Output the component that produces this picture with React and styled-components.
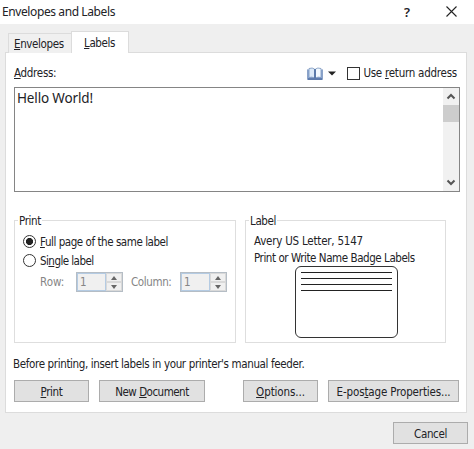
import React from "react";
import styled, { createGlobalStyle } from "styled-components";

const Global = createGlobalStyle`
  * { box-sizing: border-box; }
  html, body { margin: 0; background: #efefef; overflow: hidden; }
  button { font: inherit; color: inherit; }
`;

const Dialog = styled.main`
  width: 474px;
  height: 449px;
  background: #efefef;
  color: #222226;
  font: 11.5px/16px "DejaVu Sans Condensed", "DejaVu Sans", sans-serif;
  font-stretch: condensed;
  overflow: hidden;
`;

const Text = styled.span`
  display: block;
  white-space: nowrap;
  letter-spacing: ${(p) => p.$track ?? -0.38}px;
`;

const Key = styled.span`
  text-decoration: underline;
  text-decoration-thickness: 1px;
  text-underline-offset: 1px;
  text-decoration-skip-ink: none;
`;

const TitleBar = styled.header`
  display: flex;
  align-items: center;
  height: 24px;
  padding: 0 17px 1px 2px;
  background: #fff;
  font-family: "Noto Sans", sans-serif;
  font-size: 12px;
`;

const TitleActions = styled.div`
  display: flex;
  align-items: center;
  gap: 36px;
  margin-left: auto;
  font-size: 13px;
  font-weight: 600;
  svg { display: block; }
`;

const TabStrip = styled.nav`
  display: flex;
  align-items: flex-end;
  height: 29px;
  padding-left: 8px;
`;

const Tab = styled.div`
  position: relative;
  z-index: ${(p) => (p.$active ? 1 : 0)};
  width: ${(p) => (p.$active ? 58 : 63)}px;
  height: ${(p) => (p.$active ? 22 : 20)}px;
  padding: ${(p) => (p.$active ? "3px 0 0 12px" : "2px 0 0 5px")};
  border: 1px solid #dcdcdc;
  border-bottom: 0;
  border-right-width: ${(p) => (p.$active ? 1 : 0)}px;
  background: ${(p) => (p.$active ? "#fff" : "#f0f0f0")};
`;

const Panel = styled.section`
  width: 462px;
  height: 361px;
  margin: -1px 0 0 5px;
  padding: 12px 6px 0 8px;
  border: 1px solid #dcdcdc;
  background: #fff;
`;

const AddressHeader = styled.div`
  display: flex;
  align-items: center;
  height: 16px;
`;

const AddressTools = styled.div`
  display: flex;
  align-items: center;
  margin-left: auto;
  padding-right: 3px;
  svg { display: block; }
`;

const CheckBox = styled.span`
  width: 13px;
  height: 13px;
  margin: 0 3px 0 11px;
  border: 1px solid #333;
  background: #fff;
`;

const AddressBox = styled.div`
  display: flex;
  justify-content: space-between;
  width: 446px;
  height: 105px;
  margin-top: 6px;
  border: 1px solid #858585;
  font-family: "Noto Sans", sans-serif;
  font-size: 13.5px;
  line-height: 20px;
  > span { padding-left: 2px; }
`;

const ScrollBar = styled.div`
  display: flex;
  flex-direction: column;
  justify-content: space-between;
  width: 16px;
  background: #f1f1f1;
  svg { display: block; }
`;

const Thumb = styled.div`
  height: 17px;
  margin-bottom: auto;
  background: #cdcdcd;
`;

const Groups = styled.div`
  display: flex;
  gap: 9px;
  margin-top: 20px;
`;

const Group = styled.section`
  width: ${(p) => p.$width}px;
  height: 131px;
`;

const Legend = styled.div`
  display: flex;
  align-items: center;
  gap: 1px;
  height: 16px;
  margin-bottom: -8px;
  > span { padding-top: 2px; }
  &::before { content: ""; width: 4px; height: 1px; background: #dedede; }
  &::after { content: ""; flex: 1; height: 1px; background: #dedede; }
`;

const GroupBody = styled.div`
  height: 123px;
  padding: ${(p) => p.$pad};
  border: 1px solid #dedede;
  border-top: 0;
`;

const RadioRow = styled.div`
  display: flex;
  align-items: center;
  gap: 4px;
  height: 19px;
  > span:last-child { padding-top: 1px; }
`;

const Radio = styled.span`
  width: 13px;
  height: 13px;
  border: 1px solid #333;
  border-radius: 50%;
  background: ${(p) => (p.$on ? "radial-gradient(circle, #222 0 3.2px, #fff 3.9px)" : "#fff")};
`;

const NumberRow = styled.div`
  display: flex;
  align-items: center;
  height: 20px;
  margin-top: 2px;
  padding-left: 17px;
  color: #858585;
`;

const NumberLabel = styled.div`
  width: ${(p) => p.$width}px;
  padding-left: ${(p) => p.$inset || 0}px;
`;

const Spinner = styled.div`
  display: flex;
  justify-content: space-between;
  width: 47px;
  height: 20px;
  border: 1px solid #b5bdc5;
  background: #f0f0f0;
`;

const SpinnerValue = styled.div`
  width: 29px;
  padding-left: 2px;
  border: 1px solid #b4cbe3;
  line-height: 17px;
`;

const SpinButtons = styled.div`
  display: flex;
  flex-direction: column;
  width: 16px;
  background: #f0f0f0;
`;

const SpinButton = styled.span`
  display: grid;
  place-items: center;
  height: 9px;
  border: 1px solid #d9d9d9;
  svg { display: block; }
`;

const LabelLine = styled.div`
  height: 17px;
`;

const BadgePreview = styled.div`
  display: flex;
  flex-direction: column;
  gap: 5px;
  width: 103px;
  height: 72px;
  margin: -1px 0 0 41px;
  padding: 5px;
  border: 1px solid #333;
  border-radius: 6px;
`;

const Rule = styled.span`
  height: 1px;
  background: #222;
`;

const Note = styled.div`
  margin: 13px 0 0 -1px;
`;

const ButtonRow = styled.div`
  display: flex;
  gap: 10px;
  margin-top: 8px;
`;

const Button = styled.button`
  display: flex;
  justify-content: center;
  align-items: center;
  width: ${(p) => p.$width}px;
  height: 22px;
  padding: 1px 0 0;
  margin-left: ${(p) => p.$offset || 0}px;
  border: 1px solid #acacac;
  background: #e1e1e1;
`;

const Footer = styled.footer`
  display: flex;
  justify-content: flex-end;
  padding: 9px 6px 0 0;
`;

function ScrollArrow({ down }) {
  return (
    <svg width="16" height="17" viewBox="0 0 16 17">
      <path d={down ? "M4.500 6.500 8 10l3.500-3.500" : "M4.500 10.500 8 7l3.500 3.500"} fill="none" stroke="#555" strokeWidth="2" />
    </svg>
  );
}

function Triangle({ down }) {
  return (
    <svg width="6" height="4" viewBox="0 0 6 4">
      <path d={down ? "M0 0h6L3 4z" : "M0 4h6L3 0z"} fill="#666" />
    </svg>
  );
}

function NumberField() {
  return (
    <Spinner>
      <SpinnerValue><Text>1</Text></SpinnerValue>
      <SpinButtons>
        <SpinButton><Triangle /></SpinButton>
        <SpinButton><Triangle down /></SpinButton>
      </SpinButtons>
    </Spinner>
  );
}

function BookIcon() {
  return (
    <svg width="16" height="13" viewBox="0 0 16 13">
      <path d="M.5 2.500v10h15v-10" fill="#8fa8d2" stroke="#8ba3c8" />
      <path d="M2 1.500Q5.500 .3 7.500 2v9Q5 9.500 2 10.500z" fill="#dbe9f8" stroke="#7894bd" strokeWidth=".8" />
      <path d="M14 1.500Q10.500 .3 8.500 2v9Q11 9.500 14 10.500z" fill="#f2f9ff" stroke="#7894bd" strokeWidth=".8" />
      <path d="M8 2v9M1 12h14" stroke="#31548e" />
    </svg>
  );
}

export default function App() {
  return (
    <>
      <Global />
      <Dialog>
        <TitleBar>
          <Text $track={-0.4}>Envelopes and Labels</Text>
          <TitleActions>
            <span>?</span>
            <svg width="11" height="11" viewBox="0 0 11 11">
              <path d="m.5.5 10 10m0-10-10 10" stroke="#222" strokeWidth="1.1" />
            </svg>
          </TitleActions>
        </TitleBar>
        <TabStrip>
          <Tab><Text><Key>E</Key>nvelopes</Text></Tab>
          <Tab $active><Text><Key>L</Key>abels</Text></Tab>
        </TabStrip>
        <Panel>
          <AddressHeader>
            <Text $track={-0.3}><Key>A</Key>ddress:</Text>
            <AddressTools>
              <BookIcon />
              <svg width="13" height="5" viewBox="0 0 13 5"><path d="M5 .5h8L9 4.500z" fill="#222" /></svg>
              <CheckBox />
              <Text $track={-0.25}>Use <Key>r</Key>eturn address</Text>
            </AddressTools>
          </AddressHeader>
          <AddressBox>
            <Text $track={-0.15}>Hello World!</Text>
            <ScrollBar>
              <ScrollArrow />
              <Thumb />
              <ScrollArrow down />
            </ScrollBar>
          </AddressBox>
          <Groups>
            <Group $width={222}>
              <Legend><Text>Print</Text></Legend>
              <GroupBody $pad="12px 0 0 8px">
                <RadioRow><Radio $on /><Text $track={-0.45}><Key>F</Key>ull page of the same label</Text></RadioRow>
                <RadioRow><Radio /><Text $track={-0.55}>Si<Key>n</Key>gle label</Text></RadioRow>
                <NumberRow>
                  <NumberLabel $width={36}><Text $track={0}>Row:</Text></NumberLabel>
                  <NumberField />
                  <NumberLabel $width={57} $inset={8}><Text>Column:</Text></NumberLabel>
                  <NumberField />
                </NumberRow>
              </GroupBody>
            </Group>
            <Group $width={201}>
              <Legend><Text>Label</Text></Legend>
              <GroupBody $pad="13px 0 0 8px">
                <LabelLine><Text $track={-0.22}>Avery US Letter, 5147</Text></LabelLine>
                <LabelLine><Text $track={-0.44}>Print or Write Name Badge Labels</Text></LabelLine>
                <BadgePreview><Rule /><Rule /><Rule /><Rule /></BadgePreview>
              </GroupBody>
            </Group>
          </Groups>
          <Note><Text $track={-0.36}>Before printing, insert labels in your printer's manual feeder.</Text></Note>
          <ButtonRow>
            <Button $width={75}><Text><Key>P</Key>rint</Text></Button>
            <Button $width={106}><Text $track={-0.5}>New <Key>D</Key>ocument</Text></Button>
            <Button $width={75} $offset={28}><Text $track={-0.1}><Key>O</Key>ptions...</Text></Button>
            <Button $width={131}><Text $track={-0.15}>E-pos<Key>t</Key>age Properties...</Text></Button>
          </ButtonRow>
        </Panel>
        <Footer><Button $width={75}><Text>Cancel</Text></Button></Footer>
      </Dialog>
    </>
  );
}
